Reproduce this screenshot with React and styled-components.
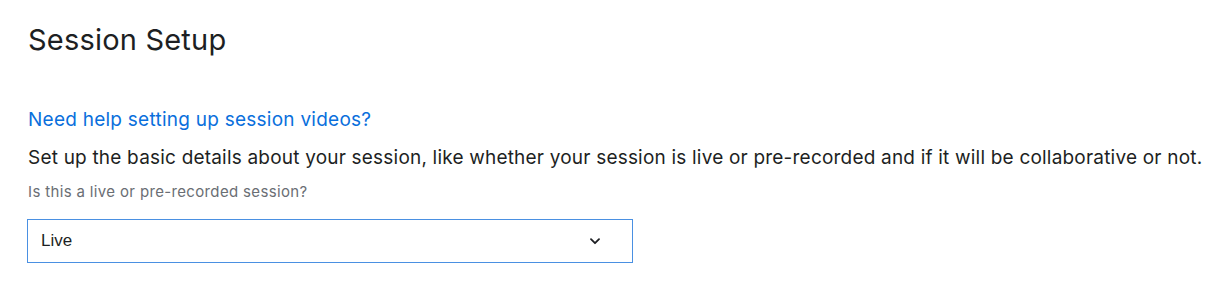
import React from 'react';
import styled, { createGlobalStyle } from 'styled-components';

const GlobalStyle = createGlobalStyle`
  body {
    margin: 0;
    background: #ffffff;
    font-family: Inter, "Noto Sans", sans-serif;
    color: #1d1f23;
  }
`;

const Page = styled.div`
  padding: 22px 27px 0 27px;
`;

const Title = styled.h1`
  margin: 0 0 50px 1px;
  font-size: 29px;
  font-weight: 400;
  line-height: 36px;
  letter-spacing: 0.2px;
  color: #1d1f23;
`;

const HelpLink = styled.a`
  display: block;
  margin-left: 1px;
  font-size: 19px;
  line-height: 24px;
  letter-spacing: 0.25px;
  color: #0a6fdc;
  text-decoration: none;
`;

const Description = styled.p`
  margin: 14px 0 0 1px;
  font-size: 19px;
  line-height: 24px;
  letter-spacing: 0.2px;
  color: #1d1f23;
`;

const Label = styled.label`
  display: block;
  margin: 13px 0 18px 1px;
  font-size: 15px;
  line-height: 18px;
  letter-spacing: 0.35px;
  color: #6a6e74;
`;

const SelectBox = styled.div`
  box-sizing: content-box;
  width: 559px;
  height: 42px;
  padding: 0 32px 0 13px;
  border: 1px solid #4a90e2;
  display: flex;
  align-items: center;
  justify-content: space-between;
  font-family: "Helvetica Neue", "Liberation Sans", Arial, sans-serif;
  font-size: 17px;
  color: #1d1f23;
`;

const Chevron = () => (
  <svg width="10" height="7" viewBox="0 0 10 7" fill="none">
    <path d="M1 1.2 L5 5.2 L9 1.2" stroke="#1d1f23" strokeWidth="1.8" strokeLinecap="round" strokeLinejoin="round" />
  </svg>
);

const App = () => (
  <>
    <GlobalStyle />
    <Page>
      <Title>Session Setup</Title>
      <HelpLink href="#">Need help setting up session videos?</HelpLink>
      <Description>
        Set up the basic details about your session, like whether your session is live or pre-recorded and if it will be collaborative or not.
      </Description>
      <Label>Is this a live or pre-recorded session?</Label>
      <SelectBox>
        <span>Live</span>
        <Chevron />
      </SelectBox>
    </Page>
  </>
);

export default App;
